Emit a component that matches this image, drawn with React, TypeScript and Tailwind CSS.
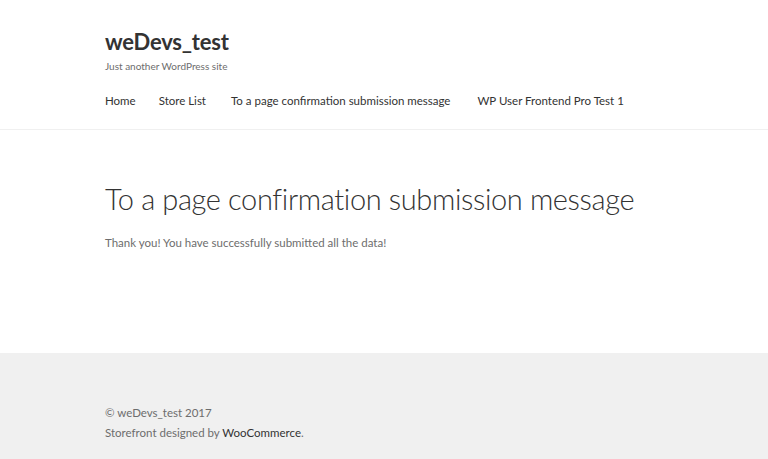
export default function App() {
  return (
    <div className="min-h-[459px] bg-white flex flex-col text-[#6d6d6d]" style={{ fontFamily: "Lato, 'Open Sans', sans-serif" }}>
      {/* Header */}
      <header className="border-b border-[#f0f0f0] px-[105px]">
        <div className="pt-[29px]">
          <h1 className="text-[22px] leading-[26px] font-bold text-[#333333] tracking-[-0.2px]">weDevs_test</h1>
          <p className="text-[10px] leading-[12px] mt-[5px] text-[#6d6d6d]">Just another WordPress site</p>
        </div>
        <nav className="flex text-[11.5px] text-[#333333] pt-[21px] pb-[20px] leading-[16px]">
          <a className="mr-[23px]">Home</a>
          <a className="mr-[25px]">Store List</a>
          <a className="mr-[27px]">To a page confirmation submission message</a>
          <a>WP User Frontend Pro Test 1</a>
        </nav>
      </header>

      {/* Content */}
      <main className="px-[105px] pt-[51px] h-[223px]">
        <h2 className="text-[29px] leading-[36px] font-light text-[#333333] tracking-[-0.37px]">
          To a page confirmation submission message
        </h2>
        <p className="text-[11.5px] leading-[16px] mt-[18px]">Thank you! You have successfully submitted all the data!</p>
      </main>

      {/* Footer */}
      <footer className="bg-[#f0f0f0] flex-1 px-[105px] pt-[50px] pb-[20px] text-[11.5px] leading-[20px] text-[#6d6d6d]">
        <p>© weDevs_test 2017</p>
        <p>
          Storefront designed by <a className="text-[#333333]">WooCommerce</a>.
        </p>
      </footer>
    </div>
  );
}
